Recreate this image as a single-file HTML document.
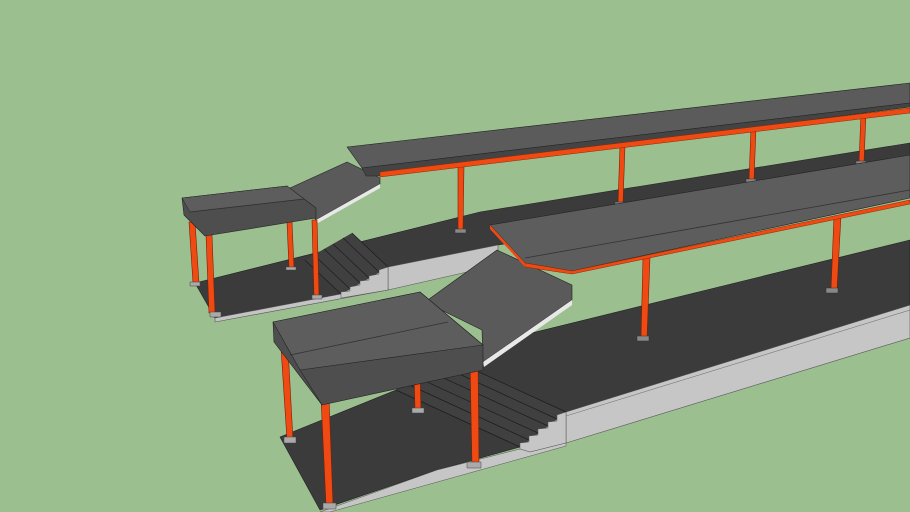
<!DOCTYPE html>
<html><head><meta charset="utf-8"><style>
html,body{margin:0;padding:0;background:#9bbf8f;width:910px;height:512px;overflow:hidden}
svg{display:block}
</style></head><body>
<svg width="910" height="512" viewBox="0 0 910 512" xmlns="http://www.w3.org/2000/svg" stroke-linejoin="round">
<rect width="910" height="512" fill="#9bbf8f"/>

<!-- BACK PLATFORM -->
<polygon points="195,283 480,212 910,143 910,180 498,245 388,267 341,294 215,318" fill="#3b3b3b" stroke="#222" stroke-width="0.6"/>
<polygon points="388,267 498,245 498,265 388,290" fill="#c4c4c4" stroke="#555" stroke-width="0.6"/>
<polygon points="341,294 388,288 388,290 215,322 215,318" fill="#c4c4c4" stroke="#555" stroke-width="0.6"/>
<!-- back stairs -->
<polygon points="305,260 352,233 388,267 341,294" fill="#404040"/>
<g stroke="#1c1c1c" stroke-width="0.7">
<line x1="314" y1="255" x2="350" y2="289"/>
<line x1="324" y1="249" x2="360" y2="283"/>
<line x1="333" y1="244" x2="369" y2="278"/>
<line x1="343" y1="238" x2="379" y2="272"/>
<line x1="352" y1="233" x2="388" y2="267"/>
<line x1="305" y1="260" x2="341" y2="294"/>
</g>
<polygon points="341,296 341,292 350,291 350,287 360,285 360,281 369,280 369,276 379,274 379,270 388,267 388,290 341,298" fill="#c4c4c4" stroke="#555" stroke-width="0.5"/>

<!-- back long canopy columns -->
<g fill="#f04a14" stroke="#7a2000" stroke-width="0.6">
<polygon points="458,166 464,165 463,230 458,231"/>
<polygon points="620,146 625,145 623,203 618,204"/>
<polygon points="751,128 756,127 754,180 749,181"/>
<polygon points="861,113 866,112 864,162 859,163"/>
</g>
<g fill="#888" stroke="#333" stroke-width="0.5">
<rect x="455" y="229" width="11" height="4"/>
<rect x="615" y="202" width="11" height="4"/>
<rect x="746" y="179" width="10" height="3"/>
<rect x="856" y="161" width="10" height="3"/>
</g>

<!-- ramp back -->
<polygon points="290,188 347,162 380,178 380,184 316,220" fill="#5a5a5a" stroke="#222" stroke-width="0.6"/>
<polygon points="316,220 380,184 380,188 318,223" fill="#e8e8e8"/>

<!-- back long canopy -->
<polygon points="347,147 910,83 910,103 362,168" fill="#5b5b5b" stroke="#222" stroke-width="0.6"/>
<polygon points="362,168 910,103 910,107 380,176 366,176" fill="#444" stroke="#222" stroke-width="0.5"/>
<polygon points="380,172 910,108 910,113 380,177" fill="#f04a14" stroke="#8a2a00" stroke-width="0.5"/>

<!-- back small canopy columns -->
<g fill="#f04a14" stroke="#7a2000" stroke-width="0.6">
<polygon points="189,222 195,222 199,283 193,283"/>
<polygon points="287,222 292,222 294,268 289,268"/>
<polygon points="206,235 212,235 215,313 209,313"/>
<polygon points="312,220 317,220 319,296 314,296"/>
</g>
<g fill="#aaa" stroke="#444" stroke-width="0.5">
<rect x="190" y="282" width="10" height="4"/>
<rect x="286" y="267" width="10" height="3"/>
<rect x="210" y="312" width="11" height="5"/>
<rect x="312" y="295" width="10" height="4"/>
</g>
<!-- back small canopy -->
<polygon points="182,198 287,186 316,208 316,218 205,236 184,215" fill="#4e4e4e" stroke="#222" stroke-width="0.6"/>
<polygon points="182,198 287,186 304,199 190,212" fill="#5d5d5d" stroke="#222" stroke-width="0.5"/>
<line x1="190" y1="212" x2="304" y2="199" stroke="#333" stroke-width="1" stroke-dasharray="1,1"/>

<!-- FRONT PLATFORM -->
<polygon points="280,437 396,390 442,355 910,240 910,305 566,412 520,447 437,470 320,510" fill="#3b3b3b" stroke="#222" stroke-width="0.6"/>
<polygon points="566,412 910,305 910,338 566,443" fill="#c6c6c6" stroke="#555" stroke-width="0.6"/>
<line x1="566" y1="416" x2="910" y2="310" stroke="#777" stroke-width="0.6"/>
<!-- front stairs -->
<polygon points="396,390 442,355 566,412 520,447" fill="#404040"/>
<g stroke="#1c1c1c" stroke-width="0.7">
<line x1="396" y1="390" x2="520" y2="447"/>
<line x1="405" y1="383" x2="529" y2="440"/>
<line x1="414" y1="376" x2="538" y2="433"/>
<line x1="424" y1="369" x2="548" y2="426"/>
<line x1="433" y1="362" x2="557" y2="419"/>
<line x1="442" y1="355" x2="566" y2="412"/>
</g>
<polygon points="520,449 520,443 529,442 529,436 538,435 538,429 548,428 548,422 557,421 557,415 566,412 566,443 530,452" fill="#c6c6c6" stroke="#555" stroke-width="0.5"/>
<polygon points="437,470 520,449 530,452 566,443 566,446 330,512 320,512" fill="#c6c6c6" stroke="#555" stroke-width="0.5"/>

<!-- front long canopy columns -->
<g fill="#f04a14" stroke="#7a2000" stroke-width="0.6">
<polygon points="643,258 650,257 647,338 641,338"/>
<polygon points="834,216 841,215 837,290 831,290"/>
</g>
<g fill="#888" stroke="#333" stroke-width="0.5">
<rect x="637" y="336" width="12" height="5"/>
<rect x="826" y="288" width="12" height="5"/>
</g>

<!-- front ramp -->
<polygon points="425,302 497,250 572,285 572,300 483,362 482,330" fill="#5a5a5a" stroke="#222" stroke-width="0.6"/>
<polygon points="483,362 572,300 572,305 484,367" fill="#e8e8e8"/>

<!-- front long canopy -->
<polygon points="490,225 910,155 910,198 572,271 525,263" fill="#5d5d5d" stroke="#222" stroke-width="0.6"/>
<line x1="525" y1="258" x2="910" y2="190" stroke="#333" stroke-width="0.8"/>
<polygon points="525,263 572,271 910,200 910,204 572,274 525,267" fill="#f04a14" stroke="#8a2a00" stroke-width="0.5"/>
<polygon points="490,225 525,263 525,267 490,229" fill="#f04a14"/>

<!-- front small canopy columns -->
<g fill="#f04a14" stroke="#7a2000" stroke-width="0.6">
<polygon points="281,348 288,348 293,440 287,440"/>
<polygon points="414,372 420,372 421,410 415,410"/>
<polygon points="321,398 329,398 333,505 326,505"/>
<polygon points="470,360 478,360 479,465 472,465"/>
</g>
<g fill="#aaa" stroke="#444" stroke-width="0.5">
<rect x="284" y="437" width="12" height="6"/>
<rect x="412" y="408" width="12" height="5"/>
<rect x="323" y="503" width="13" height="6"/>
<rect x="467" y="462" width="14" height="6"/>
</g>

<!-- front small canopy -->
<polygon points="273,322 420,292 483,345 483,370 322,405 274,342" fill="#4e4e4e" stroke="#222" stroke-width="0.6"/>
<polygon points="273,322 420,292 483,345 300,370" fill="#5d5d5d" stroke="#222" stroke-width="0.6"/>
<line x1="290" y1="355" x2="448" y2="322" stroke="#333" stroke-width="0.8"/>
<line x1="300" y1="370" x2="322" y2="405" stroke="#222" stroke-width="0.6"/>
</svg>
</body></html>
